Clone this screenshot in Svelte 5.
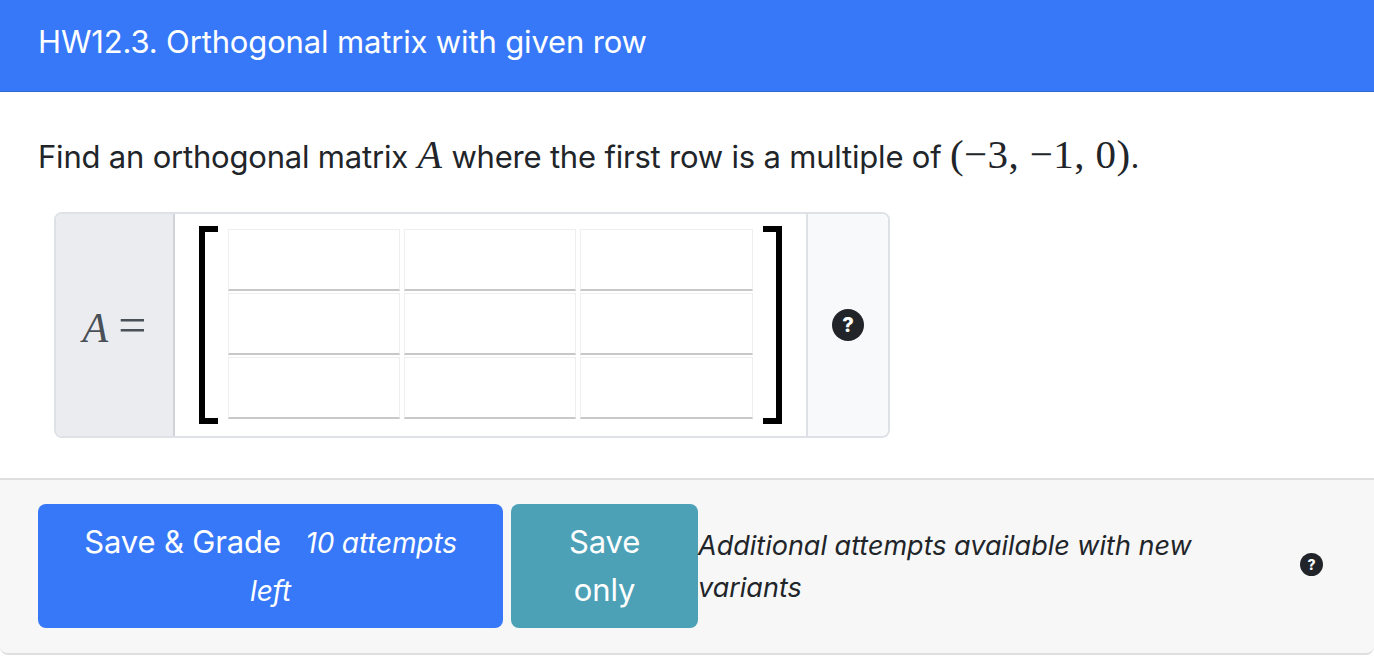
<script>
	const cells = Array(9).fill('');
</script>

<div class="card">
	<header>HW12.3. Orthogonal matrix with given row</header>

	<section class="question">
		<p>
			Find an orthogonal matrix <span class="math var">A</span> where the first row is a multiple of
			<span class="math vec">(−3, −1, 0)</span>.
		</p>

		<div class="group">
			<div class="label"><span class="math"><i>A</i><span class="eq">=</span></span></div>
			<div class="matrix">
				<div class="bracket left"></div>
				<div class="cells">
					{#each cells as value}
						<input type="text" {value} />
					{/each}
				</div>
				<div class="bracket right"></div>
			</div>
			<div class="help">
				<span class="hint big">?</span>
			</div>
		</div>
	</section>

	<footer>
		<button class="grade">Save &amp; Grade <small>10 attempts</small> <small>left</small></button>
		<button class="save">Save only</button>
		<em>Additional attempts available with new variants</em>
		<span class="hint small">?</span>
	</footer>
</div>

<style>
	:global(body) {
		background: #fff;
	}

	.card {
		font-family: Inter, "Noto Sans", sans-serif;
		color: #212529;
		height: 655px;
		display: flex;
		flex-direction: column;
		box-sizing: border-box;
	}

	header {
		background: #3778f8;
		color: #fff;
		font-size: 31px;
		line-height: 36px;
		height: 92px;
		box-sizing: border-box;
		padding: 24px 38px 0;
		border-bottom: 1px solid #2f67d4;
		letter-spacing: -0.15px;
	}

	.question {
		flex: 1;
		padding: 42px 38px 0;
	}

	p {
		margin: 0;
		font-size: 31px;
		line-height: 40px;
		letter-spacing: -0.2px;
		height: 78px;
		white-space: nowrap;
	}

	.math {
		font-family: "Liberation Serif", serif;
		line-height: 1;
	}

	.var {
		font-style: italic;
		font-size: 40px;
		letter-spacing: 0;
		margin: 0 1px;
	}

	.vec {
		font-size: 41px;
		letter-spacing: 0.4px;
	}

	.group {
		margin-left: 16px;
		width: 836px;
		height: 226px;
		box-sizing: border-box;
		display: flex;
		border: 2px solid #dee2e6;
		border-radius: 8px;
		overflow: hidden;
	}

	.label {
		width: 117px;
		background: #eaecf0;
		border-right: 2px solid #ced4da;
		display: flex;
		align-items: center;
		justify-content: center;
		color: #495057;
		font-size: 42px;
		box-sizing: content-box;
	}

	.eq {
		font-size: 50px;
		margin-left: 10px;
	}

	.matrix {
		width: 631px;
		display: flex;
		align-items: center;
		padding-left: 24px;
		box-sizing: border-box;
	}

	.bracket {
		width: 19px;
		height: 198px;
		box-sizing: border-box;
		border: 6px solid #000;
	}

	.bracket.left {
		border-right: 0;
	}

	.bracket.right {
		border-left: 0;
		margin-left: 10px;
	}

	.cells {
		margin: 0 0 2px 10px;
		display: grid;
		grid-template-columns: 172px 172px 173px;
		grid-auto-rows: 62px;
		gap: 2px 4px;
	}

	input {
		width: 100%;
		height: 100%;
		box-sizing: border-box;
		border: 1px solid #eee;
		border-bottom: 2px solid #c8c8c8;
		background: #fff;
		padding: 0;
		margin: 0;
		outline: none;
	}

	.help {
		flex: 1;
		background: #f8f9fa;
		border-left: 2px solid #dee2e6;
		display: flex;
		align-items: center;
		justify-content: center;
	}

	.hint {
		background: #212529;
		color: #fff;
		border-radius: 50%;
		display: flex;
		align-items: center;
		justify-content: center;
		font-weight: 800;
		flex: none;
	}

	.hint.big {
		width: 32px;
		height: 32px;
		font-size: 20px;
	}

	.hint.small {
		width: 23px;
		height: 23px;
		font-size: 14px;
		margin: 49px 0 0 42px;
	}

	footer {
		height: 177px;
		box-sizing: border-box;
		background: #f7f7f7;
		border-top: 2px solid #dfdfdf;
		border-bottom: 2px solid #dfdfdf;
		border-radius: 0 0 8px 8px;
		padding: 24px 0 0 38px;
		display: flex;
		align-items: flex-start;
	}

	button {
		border: 0;
		border-radius: 8px;
		color: #fff;
		font-family: inherit;
		font-size: 31px;
		line-height: 48px;
		height: 124px;
		text-align: center;
		letter-spacing: -0.15px;
	}

	.grade {
		width: 465px;
		background: #3778f8;
		padding: 14px 40px;
	}

	small {
		font-size: 28px;
		line-height: 1;
		font-style: italic;
	}

	small:first-of-type {
		margin-left: 16px;
	}

	.save {
		width: 187px;
		margin-left: 8px;
		background: #4ca1b7;
		padding: 14px 40px;
	}

	em {
		width: 560px;
		font-size: 27px;
		line-height: 42px;
		margin-top: 21px;
	}
</style>
